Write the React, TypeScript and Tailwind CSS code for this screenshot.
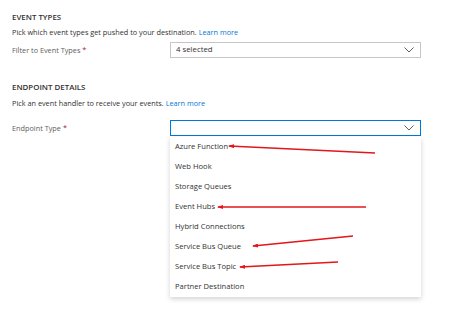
import React from "react";

const font = { fontFamily: '"Open Sans", "Noto Sans", sans-serif' };

const options = [
  "Azure Function",
  "Web Hook",
  "Storage Queues",
  "Event Hubs",
  "Hybrid Connections",
  "Service Bus Queue",
  "Service Bus Topic",
  "Partner Destination",
];

function Chevron() {
  return (
    <svg width="10" height="6" viewBox="0 0 10 6" className="text-[#605e5c]">
      <path d="M0.5 0.5 L5 5 L9.5 0.5" fill="none" stroke="currentColor" strokeWidth="1" />
    </svg>
  );
}

function Arrow({ x1, y1, x2, y2 }: { x1: number; y1: number; x2: number; y2: number }) {
  return (
    <line x1={x1} y1={y1} x2={x2} y2={y2} stroke="#e3161b" strokeWidth="1.3" markerEnd="url(#head)" />
  );
}

export default function App() {
  return (
    <div className="relative w-[474px] h-[324px] bg-white overflow-hidden" style={font}>
      <div className="pl-[12px] pt-[11px] text-[7.3px] text-[#323130]">
        {/* Event types */}
        <h2 className="text-[7.9px] font-semibold leading-[12px]">EVENT TYPES</h2>
        <p className="mt-[3px] leading-[12px]">
          Pick which event types get pushed to your destination.{" "}
          <span className="text-[#0078d4]">Learn more</span>
        </p>
        <div className="mt-[4px] flex items-center h-[16px]">
          <div className="w-[158px] text-[#605e5c]">
            Filter to Event Types <span className="text-[#a4262c]">*</span>
          </div>
          <div className="w-[251px] h-[16px] border border-[#c8c6c4] flex items-center justify-between pl-[5px] pr-[6px] text-[7.8px]">
            <span>4 selected</span>
            <Chevron />
          </div>
        </div>

        {/* Endpoint details */}
        <h2 className="mt-[23px] text-[7.9px] font-semibold leading-[12px]">ENDPOINT DETAILS</h2>
        <p className="mt-[4px] leading-[12px]">
          Pick an event handler to receive your events.{" "}
          <span className="text-[#0078d4]">Learn more</span>
        </p>
        <div className="mt-[11px] flex">
          <div className="w-[158px] h-[16px] flex items-center text-[#605e5c]">
            Endpoint Type <span className="ml-[2px] text-[#a4262c]">*</span>
          </div>
          <div className="w-[251px]">
            <div className="h-[16px] border border-[#0078d4] flex items-center justify-end pr-[6px]">
              <Chevron />
            </div>
            <ul className="mt-[1px] bg-white text-[7.6px] shadow-[0_2px_5px_rgba(0,0,0,0.18)]">
              {options.map((o) => (
                <li key={o} className="h-[20px] flex items-center pl-[5px]">
                  {o}
                </li>
              ))}
            </ul>
          </div>
        </div>
      </div>

      <svg className="absolute inset-0 pointer-events-none" width="474" height="324">
        <defs>
          <marker id="head" markerWidth="6" markerHeight="4" refX="5" refY="2" orient="auto" markerUnits="userSpaceOnUse">
            <path d="M0 0 L6 2 L0 4 Z" fill="#e3161b" />
          </marker>
        </defs>
        <Arrow x1={375} y1={153} x2={229} y2={146} />
        <Arrow x1={366} y1={207} x2={218} y2={207} />
        <Arrow x1={353} y1={236} x2={253} y2={246} />
        <Arrow x1={338} y1={262} x2={240} y2={267} />
      </svg>
    </div>
  );
}
